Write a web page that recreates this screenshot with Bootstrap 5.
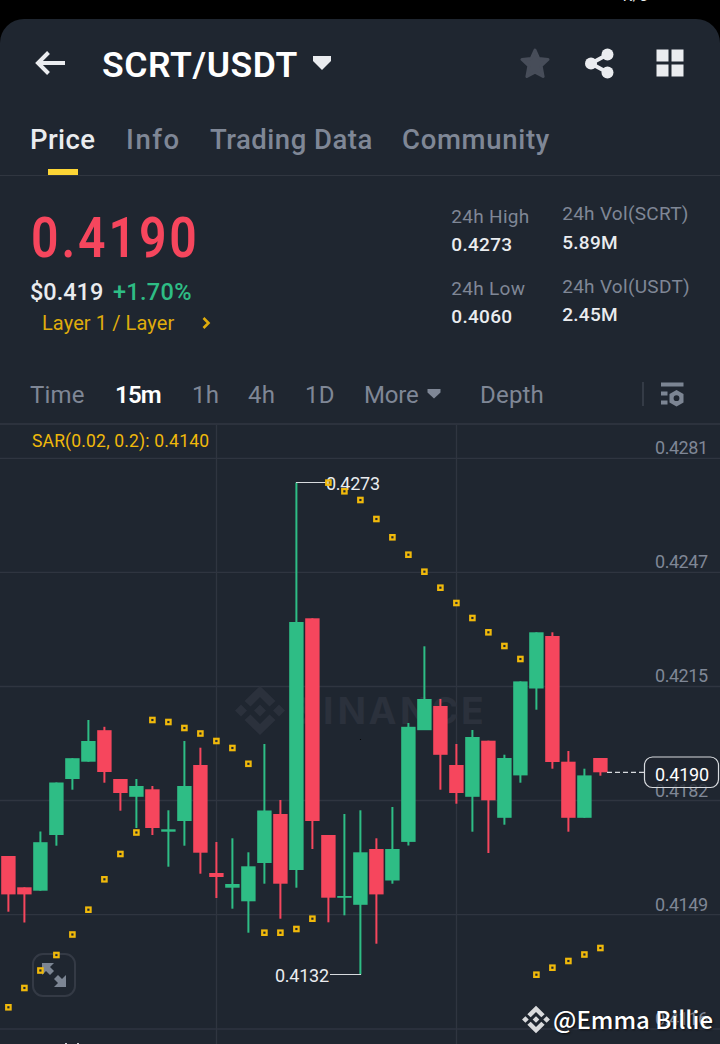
<!DOCTYPE html>
<html lang="en">
<head>
<meta charset="utf-8">
<meta name="viewport" content="width=device-width, initial-scale=1">
<title>SCRT/USDT</title>
<link rel="stylesheet" href="https://cdn.jsdelivr.net/npm/bootstrap@5.3.0/dist/css/bootstrap.min.css">
<style>
:root{--ink:#1f2630;--line:#2c323d;--muted:#7f8796;--light:#eaecef;--up:#2ebd85;--down:#f6465d;--gold:#f0b90b}
body{background:#000;color:var(--light);font-family:Roboto,"Liberation Sans",sans-serif;width:720px;height:1044px;overflow:hidden;line-height:1}
.status{height:19px;overflow:hidden}
.status span{margin:-11px 72px 0 0;font-size:15px;letter-spacing:.6px;height:15px}
.sheet{background:var(--ink);border-radius:24px 24px 0 0;height:1025px;overflow:hidden}
.topbar{height:88px;padding:0 35px}
.pair{font-size:35.5px;font-weight:600;color:#fff;letter-spacing:.6px;width:194px;margin-left:36px;padding-top:5px;white-space:nowrap}
.tabs{height:69px;padding-left:30px;border-bottom:1px solid #303640;font-size:27.5px;font-weight:500;color:var(--muted);letter-spacing:.7px}
.tabs span{white-space:nowrap;padding-top:19px;height:68px}
.tabs .on{color:var(--light);position:relative;letter-spacing:.4px}
.tabs .on::after{content:"";position:absolute;left:18px;bottom:0;width:30px;height:6px;background:#fcd535}
.summary{height:188px;padding:0 30px}
.price{font-size:56px;font-weight:600;color:var(--down);height:58px;margin:34px 0 0 1px;white-space:nowrap;transform:scaleX(.86);transform-origin:0 0;letter-spacing:3.400px}
.fiat{font-size:23.5px;font-weight:500;margin-top:13px;height:24px;white-space:nowrap}
.layer{font-size:20px;color:#dfac0c;margin:8px 0 0 12px;white-space:nowrap;letter-spacing:.1px}
.stat{white-space:nowrap;font-size:19px;height:72px}
.stat b{display:block;font-weight:500;margin-top:9px;color:var(--light);letter-spacing:.3px}
.stat span{color:var(--muted);letter-spacing:.3px}
.frames{height:61px;padding:0 35px 0 30px;font-size:24px;color:var(--muted);border-bottom:2px solid var(--line);letter-spacing:.2px}
.frames span{white-space:nowrap;padding-top:2px}
.frames .on{color:#fff;font-weight:600;letter-spacing:-.8px}
.chart{height:619px;position:relative}
.chart svg.plot{display:block}
.credit{position:absolute;right:7px;bottom:9px;font:500 24px/32px "Noto Sans CJK SC",sans-serif;color:#fff;text-shadow:1px 1px 2px #000b;white-space:nowrap}
</style>
</head>
<body>
<div class="status d-flex justify-content-end"><span>K/s</span></div>
<main class="sheet d-flex flex-column">
  <header class="topbar d-flex align-items-center">
    <svg width="31" height="24" viewBox="0 0 31 24" fill="none" stroke="#eaecef" stroke-width="4"><path d="M30 12H3M13.5 1.500L3 12l10.500 10.500"/></svg>
    <div class="pair">SCRT/USDT</div>
    <svg style="margin-left:17px" width="18" height="14" viewBox="0 0 18 14" fill="#eaecef"><path d="M0 0h18v5l-9 9-9-9z"/></svg>
    <svg class="ms-auto" width="30" height="31" viewBox="0 0 30 31"><path d="M15 2l3.800 8.500 9.200 1-6.900 6.400 2 10.600L15 24.200 6.900 28.500l2-10.600L2 11.500l9.200-1z" fill="#474d59" stroke="#474d59" stroke-width="3" stroke-linejoin="round"/></svg>
    <svg style="margin-left:35px" width="29" height="31" viewBox="0 0 29 31" fill="#eaecef" stroke="#eaecef"><path d="M22.500 6.500L6 15.500l16.500 9" fill="none" stroke-width="4"/><g stroke="none"><circle cx="22.500" cy="6.500" r="6"/><circle cx="6" cy="15.500" r="6"/><circle cx="22.500" cy="24.500" r="6"/></g></svg>
    <svg style="margin-left:42px" width="29" height="28" viewBox="0 0 29 28" fill="#eaecef"><path d="M.5.500h12v12h-12zM15.500.500h12v12h-12zM.5 15.500h12v12h-12zM15.500 15.500h12v12h-12z"/></svg>
  </header>
  <nav class="tabs d-flex">
    <span class="on" style="width:96px">Price</span><span style="width:84px;letter-spacing:1.600px">Info</span><span style="width:192px;letter-spacing:.5px">Trading Data</span><span>Community</span>
  </nav>
  <section class="summary d-flex">
    <div style="width:421px">
      <div class="price">0.4190</div>
      <div class="fiat d-flex"><span style="width:83px">$0.419</span><span style="color:var(--up);letter-spacing:.3px">+1.70%</span></div>
      <div class="layer d-flex align-items-center"><span style="width:160px">Layer 1 / Layer</span><svg width="9" height="12" viewBox="0 0 9 12" fill="none" stroke="#dfac0c" stroke-width="2.600"><path d="M1.500 1L6.500 6l-5 5"/></svg></div>
    </div>
    <div style="width:111px;padding:31px 0 0 1px"><div class="stat"><span>24h High</span><b>0.4273</b></div><div class="stat"><span>24h Low</span><b>0.4060</b></div></div>
    <div style="padding:28px 0 0 1px"><div class="stat" style="height:73px"><span>24h Vol(SCRT)</span><b style="margin-top:10px">5.89M</b></div><div class="stat"><span>24h Vol(USDT)</span><b>2.45M</b></div></div>
  </section>
  <nav class="frames d-flex align-items-center">
    <span style="width:85px">Time</span><span class="on" style="width:77px">15m</span><span style="width:56px">1h</span><span style="width:57px">4h</span><span style="width:59px">1D</span><span style="width:63px;letter-spacing:-.2px">More</span>
    <svg width="14" height="10" viewBox="0 0 14 10" fill="#7f8796"><path d="M.5 0h13v3.500L7 9.500.5 3.500z"/></svg>
    <span style="margin-left:39px">Depth</span>
    <svg class="ms-auto" width="44" height="26" viewBox="0 0 44 26"><path d="M2 1v24" stroke="#343b46" stroke-width="2"/><g fill="#7c8593"><path d="M20 1.500h22.500v4H20zM20 10.500h6.500v4H20zM20 19.500h6.500v4H20z"/><path fill-rule="evenodd" d="M35.500 9l7 4v8.500l-7 4-7-4V13zm0 5.300a2.900 2.900 0 1 0 0 5.800 2.900 2.900 0 0 0 0-5.800z"/></g></svg>
  </nav>
  <section class="chart">
    <svg class="plot" width="720" height="619" viewBox="0 425 720 619" font-family="Roboto, sans-serif" font-size="18">
      <g id="grid" stroke="#2f3540" stroke-width="1.300"></g>
      <g fill="#2b313c">
        <g id="wm" transform="translate(260 710.500)"><path d="M0-24.500L15.500-9.500 9.500-4 0-13.500-9.500-4-15.500-9.500zM0 24.500L15.500 9.500 9.500 4 0 13.500-9.500 4-15.500 9.500zM0-6L6 0 0 6-6 0zM-19-6l6 6-6 6-6-6zM19-6l6 6-6 6-6-6z"/></g>
        <text x="287.500 323 337.500 368.500 400 431 461" y="724" font-family="Inter, sans-serif" font-weight="700" font-size="37.500">BINANCE</text>
      </g>
      <g fill="#7f8796" id="axis"></g>
      <g fill="none" stroke="#343a45" stroke-width="2"><rect x="33" y="954" width="42" height="42" rx="10"/></g>
      <path fill="#7c8593" d="M42 963h12l-4 4 4 4-4 4-4-4-4 4zM66 987H54l4-4-4-4 4-4 4 4 4-4z"/>
      <g id="candles"></g>
      <path d="M296 482.500h31M330 974.500h31" stroke="#d7dade" stroke-width="1.200"/>
      <g fill="#eaecef"><text x="326" y="490" textLength="54">0.4273</text><text x="275" y="982" textLength="54">0.4132</text></g>
      <g id="sar"></g>
      <text x="32" y="447" fill="#f0b90b" font-size="17.500" textLength="177">SAR(0.02, 0.2): 0.4140</text>
      <path d="M607 772.300h37" stroke="#d7dade" stroke-width="1.300" stroke-dasharray="5 3"/>
      <rect x="644.500" y="757" width="74" height="30.500" rx="8" fill="#1f2630" fill-opacity=".8" stroke="#d7dade" stroke-width="1.200"/>
      <text x="655" y="781" fill="#fff" textLength="54">0.4190</text>
      <circle cx="360.500" cy="739.500" r=".6" fill="#000"/>
      <path d="M65 1043.500h2M77 1043.500h2" stroke="#cfd2d7"/>
    </svg>
    <div class="credit d-flex align-items-center"><svg style="margin-right:3px" width="28" height="29" viewBox="-25 -26 50 52" fill="#d9dadc"><path d="M0-24.500L15.500-9.500 9.500-4 0-13.500-9.500-4-15.500-9.500zM0 24.500L15.500 9.500 9.500 4 0 13.500-9.500 4-15.500 9.500zM0-6L6 0 0 6-6 0zM-19-6l6 6-6 6-6-6zM19-6l6 6-6 6-6-6z"/></svg>@Emma Billie</div>
  </section>
</main>
<script src="https://cdn.jsdelivr.net/npm/bootstrap@5.3.0/dist/js/bootstrap.bundle.min.js"></script>
<script>
// Candles: direction (1 = up), body top, body bottom, high, low
const candles = [
[0,856,894.4,856,911.7],[0,887.3,894.4,887.3,922.5],[1,842.2,890.7,831.5,890.7],[1,782.5,835,782.5,845.7],
[1,758.2,779,758.2,789.7],[1,741,761.7,720,761.7],[0,730.2,772,726.8,782.7],[0,779,793,779,810.7],
[1,786,796.8,779,828],[0,789.3,828,786,835],[1,829.3,831.7,810.3,866.7],[1,786,821,741,845.7],
[0,765,852.7,747.7,873.7],[0,873,877,842,898],[1,884,887.7,838.3,908.7],[1,866.3,901.3,852.3,932.7],
[1,810.5,863,744,883.7],[0,814,883.7,800,918.7],[1,622,870,482.5,887.7],[0,618.3,821,618.3,849],
[0,835,897.7,835,922.3],[1,896,897.8,814,915.3],[1,852.3,904.8,810.3,974.5],[0,849,894.4,838.3,943.7],
[1,849,880.5,807,883.7],[1,726.8,841.9,723,845.5],[1,699,730.2,646.3,730],[0,706,754.8,699,789.7],
[0,765,793,744,803.7],[1,737,796.8,730,831.7],[0,740.7,800.3,740.7,853],[1,758,817.8,754.7,824.7],
[1,681.4,775.4,681.4,782.7],[1,632.3,688.5,632.3,709.7],[0,636,762,632.3,768.7],[0,761.7,817.8,751,831.7],
[1,775.4,817.8,768.7,817.8],[0,758,772.3,758,775.7]];
const sar = [1007.3,988,970.5,955,934.5,909.7,879.3,854,832.5,720,722,728,733.5,741,748,763.8,932.7,932.7,929,918.7,
482.6,491.3,500,519,537.3,554.7,571.7,587.7,603,618,632.3,646,659,974.7,967.7,961,954.5,948];
const put = (id, html) => document.getElementById(id).innerHTML = html;
const rows = [[458.4,.4281,454],[572.4,.4247,568],[686.5,.4215,682],[800.5,.4182,797],[914.7,.4149,911],[1029,.4116,1025]];
put('grid', rows.map(r => `<path d="M0 ${r[0]}h720"/>`).join('') + '<path d="M216.500 425v619M456.500 425v619"/>');
put('axis', rows.map(r => `<text x="655" y="${r[2]}" textLength="53">${r[1].toFixed(4)}</text>`).join(''));
put('candles', candles.map(([up, t, b, h, l], i) => {
  const x = 8.4 + 16 * i;
  return `<g fill="${up ? '#2ebd85' : '#f6465d'}"><rect x="${x - 1}" y="${h}" width="2" height="${l - h}"/><rect x="${x - 7.2}" y="${t}" width="14.4" height="${b - t}"/></g>`;
}).join(''));
put('sar', sar.map((y, i) => `<rect x="${8.4 + 16 * i - 2.2}" y="${y - 2.2}" width="4.4" height="4.4" fill="none" stroke="#f0b90b" stroke-width="2.200"/>`).join(''));
</script>
</body>
</html>
